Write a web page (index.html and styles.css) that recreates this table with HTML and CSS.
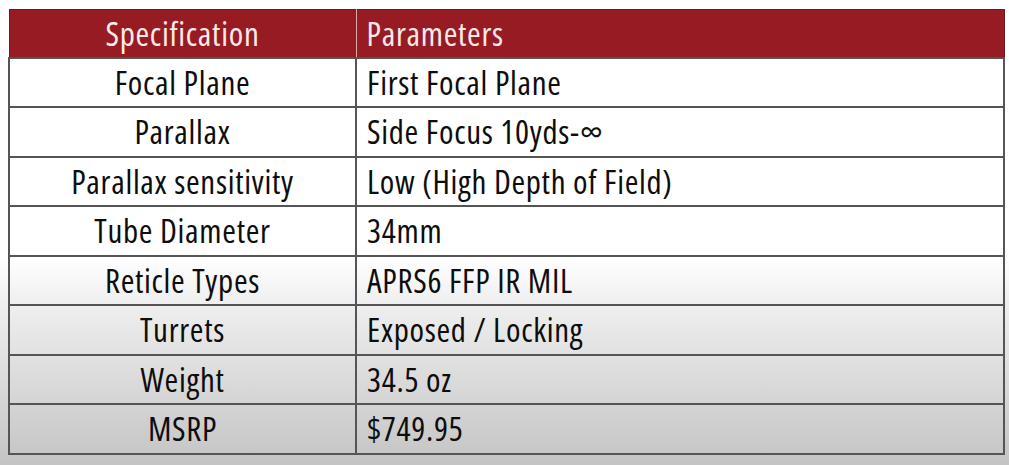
FILE: index.html
```html
<!DOCTYPE html>
<html>
<head>
<meta charset="utf-8">
<link rel="stylesheet" href="styles.css">
</head>
<body>
<table class="spec">
  <thead>
    <tr><th class="c1">Specification</th><th class="c2">Parameters</th></tr>
  </thead>
  <tbody>
    <tr><td class="c1">Focal Plane</td><td class="c2">First Focal Plane</td></tr>
    <tr><td class="c1">Parallax</td><td class="c2">Side Focus 10yds-∞</td></tr>
    <tr><td class="c1">Parallax sensitivity</td><td class="c2">Low (High Depth of Field)</td></tr>
    <tr><td class="c1">Tube Diameter</td><td class="c2">34mm</td></tr>
    <tr><td class="c1">Reticle Types</td><td class="c2">APRS6 FFP IR MIL</td></tr>
    <tr><td class="c1">Turrets</td><td class="c2">Exposed / Locking</td></tr>
    <tr><td class="c1">Weight</td><td class="c2">34.5 oz</td></tr>
    <tr><td class="c1">MSRP</td><td class="c2">$749.95</td></tr>
  </tbody>
</table>
</body>
</html>
```

FILE: styles.css
```css
html, body {
  height: 100%;
}
body {
  margin: 0;
  padding: 9px 4px 0 8px;
  box-sizing: border-box;
  background: linear-gradient(to bottom, #ffffff 0px, #ffffff 258px, #f0f0f0 300px, #c4c4c4 465px);
  font-family: "Open Sans", "Roboto Condensed", sans-serif;
  font-stretch: condensed;
  overflow: hidden;
}
.spec {
  width: 997px;
  border-collapse: collapse;
  table-layout: fixed;
}
.spec .c1 {
  width: 347px;
  text-align: center;
}
.spec .c2 {
  text-align: left;
  padding-left: 10px;
}
.spec th {
  height: 48px;
  padding-top: 0;
  padding-bottom: 0;
  background: #961b23;
  color: #fbe9e9;
  font-weight: 500;
  font-size: 33px;
  letter-spacing: 0.7px;
  border: 1px solid #6e1a1e;
  box-sizing: border-box;
  line-height: 1;
}
.spec th.c1 {
  border-right: 1px solid #e2a7aa;
}
.spec td {
  height: 49.5px;
  padding-top: 0;
  padding-bottom: 0;
  color: #0d0d0d;
  font-weight: 500;
  font-size: 33px;
  letter-spacing: 0.7px;
  line-height: 1;
  border: 2px solid #555555;
  box-sizing: border-box;
  white-space: nowrap;
}
```
